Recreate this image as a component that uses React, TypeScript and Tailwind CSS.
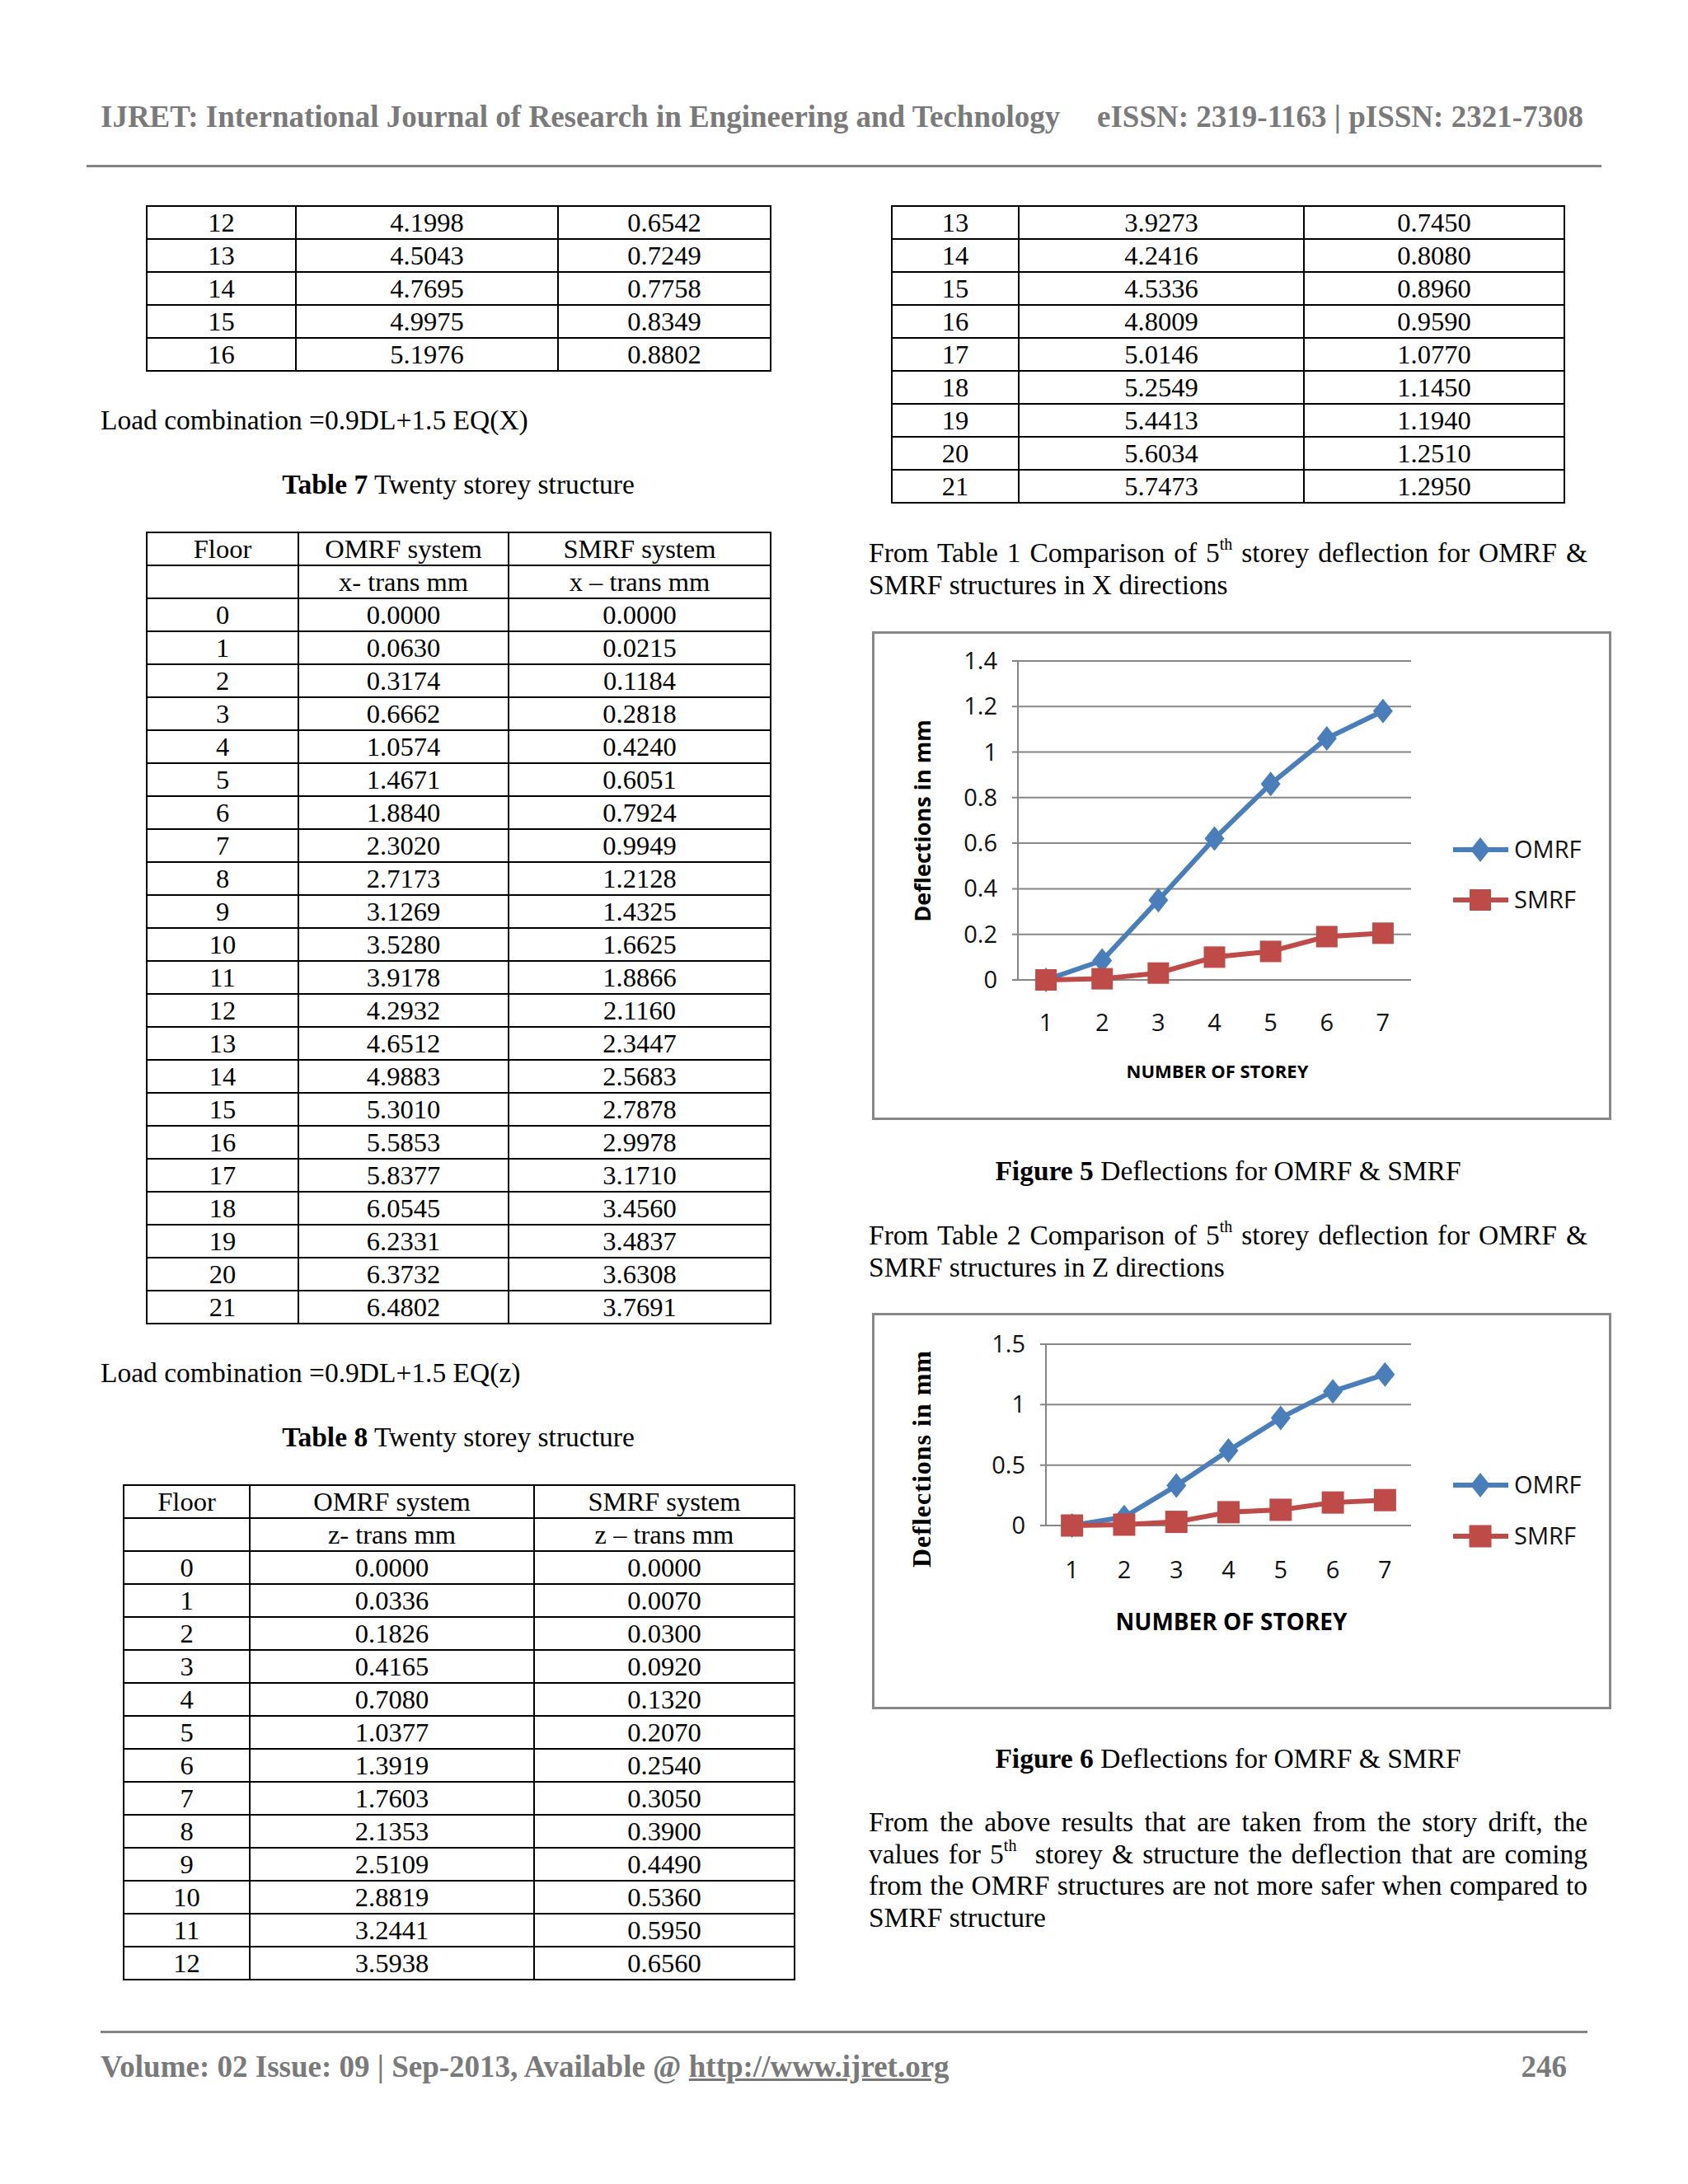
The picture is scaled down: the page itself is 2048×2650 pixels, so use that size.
import React from "react"

type Row = string[]

const tableA: Row[] = [
  ["12", "4.1998", "0.6542"],
  ["13", "4.5043", "0.7249"],
  ["14", "4.7695", "0.7758"],
  ["15", "4.9975", "0.8349"],
  ["16", "5.1976", "0.8802"],
]

const tableB: Row[] = [
  ["13", "3.9273", "0.7450"],
  ["14", "4.2416", "0.8080"],
  ["15", "4.5336", "0.8960"],
  ["16", "4.8009", "0.9590"],
  ["17", "5.0146", "1.0770"],
  ["18", "5.2549", "1.1450"],
  ["19", "5.4413", "1.1940"],
  ["20", "5.6034", "1.2510"],
  ["21", "5.7473", "1.2950"],
]

const table7: Row[] = [
  ["Floor", "OMRF system", "SMRF system"],
  ["", "x- trans mm", "x \u2013 trans mm"],
  ["0", "0.0000", "0.0000"],
  ["1", "0.0630", "0.0215"],
  ["2", "0.3174", "0.1184"],
  ["3", "0.6662", "0.2818"],
  ["4", "1.0574", "0.4240"],
  ["5", "1.4671", "0.6051"],
  ["6", "1.8840", "0.7924"],
  ["7", "2.3020", "0.9949"],
  ["8", "2.7173", "1.2128"],
  ["9", "3.1269", "1.4325"],
  ["10", "3.5280", "1.6625"],
  ["11", "3.9178", "1.8866"],
  ["12", "4.2932", "2.1160"],
  ["13", "4.6512", "2.3447"],
  ["14", "4.9883", "2.5683"],
  ["15", "5.3010", "2.7878"],
  ["16", "5.5853", "2.9978"],
  ["17", "5.8377", "3.1710"],
  ["18", "6.0545", "3.4560"],
  ["19", "6.2331", "3.4837"],
  ["20", "6.3732", "3.6308"],
  ["21", "6.4802", "3.7691"],
]

const table8: Row[] = [
  ["Floor", "OMRF system", "SMRF system"],
  ["", "z- trans mm", "z \u2013 trans mm"],
  ["0", "0.0000", "0.0000"],
  ["1", "0.0336", "0.0070"],
  ["2", "0.1826", "0.0300"],
  ["3", "0.4165", "0.0920"],
  ["4", "0.7080", "0.1320"],
  ["5", "1.0377", "0.2070"],
  ["6", "1.3919", "0.2540"],
  ["7", "1.7603", "0.3050"],
  ["8", "2.1353", "0.3900"],
  ["9", "2.5109", "0.4490"],
  ["10", "2.8819", "0.5360"],
  ["11", "3.2441", "0.5950"],
  ["12", "3.5938", "0.6560"],
]

// widths in px, first column already minus the 2px left border
function DataTable({ rows, widths, className }: { rows: Row[]; widths: number[]; className: string }) {
  return (
    <div className={`border-t-2 border-l-2 border-black w-fit ${className}`}>
      {rows.map((r, i) => (
        <div key={i} className="flex">
          {r.map((c, j) => (
            <div
              key={j}
              style={{ width: widths[j] }}
              className="h-[40px] border-r-2 border-b-2 border-black flex items-center justify-center text-[32.5px] leading-none"
            >
              {c}
            </div>
          ))}
        </div>
      ))}
    </div>
  )
}

function JLine({ children }: { children: React.ReactNode }) {
  return <div className="whitespace-nowrap text-justify [text-align-last:justify]">{children}</div>
}

function Th() {
  return <sup className="text-[20px] -top-[0.75em]">th</sup>
}

type ChartCfg = {
  h: number
  axisX: number
  tickX: number
  y0: number
  pxPerUnit: number
  ticks: [number, string][]
  labelEnd: number
  catW: number
  xLabelY: number
  titleX: number
  titleY: number
  titleSize: number
  yTitleY: number
  yTitleSerif: boolean
  legendY: [number, number]
  omrf: number[]
  smrf: number[]
  marker: number
}

const BLUE = "#4a7ebb"
const RED = "#be4b48"
const GRID = "#868686"
const SANS = "'Open Sans', 'Noto Sans', sans-serif"

function Chart({ c }: { c: ChartCfg }) {
  const top = c.y0 - c.ticks[c.ticks.length - 1][0] * c.pxPerUnit
  const xs = [1, 2, 3, 4, 5, 6, 7].map((i) => c.axisX + c.catW * (i - 0.5))
  const yv = (v: number) => c.y0 - v * c.pxPerUnit
  const diamond = (x: number, y: number, k: string) => (
    <polygon key={k} points={`${x},${y - 15} ${x + 12},${y} ${x},${y + 15} ${x - 12},${y}`} fill={BLUE} />
  )
  const square = (x: number, y: number, k: string) => {
    const s = c.marker
    return <rect key={k} x={x - s / 2} y={y - s / 2} width={s} height={s} fill={RED} />
  }
  return (
    <div className="ml-[4px] w-[897px] border-[3px] border-[#888888]" style={{ height: c.h }}>
      <svg width={891} height={c.h - 6} className="block">
        <g transform="translate(-3,-3)">
          {c.ticks.map(([v, l]) => (
            <g key={l}>
              <line x1={c.tickX} x2={654} y1={yv(v)} y2={yv(v)} stroke={GRID} strokeWidth={2} />
              <text x={c.labelEnd} y={yv(v) + 10} textAnchor="end" fontFamily={SANS} fontSize={29} fill="#111">
                {l}
              </text>
            </g>
          ))}
          <line x1={c.axisX} x2={c.axisX} y1={top} y2={c.y0} stroke={GRID} strokeWidth={2} />
          {xs.map((x, i) => (
            <text key={i} x={x} y={c.xLabelY + 10} textAnchor="middle" fontFamily={SANS} fontSize={29} fill="#111">
              {i + 1}
            </text>
          ))}
          <polyline
            points={c.omrf.map((v, i) => `${xs[i]},${yv(v)}`).join(" ")}
            fill="none"
            stroke={BLUE}
            strokeWidth={6}
            strokeLinejoin="round"
          />
          {c.omrf.map((v, i) => diamond(xs[i], yv(v), "d" + i))}
          <polyline
            points={c.smrf.map((v, i) => `${xs[i]},${yv(v)}`).join(" ")}
            fill="none"
            stroke={RED}
            strokeWidth={6}
            strokeLinejoin="round"
          />
          {c.smrf.map((v, i) => square(xs[i], yv(v), "s" + i))}
          <text
            x={c.titleX}
            y={c.titleY}
            textAnchor="middle"
            dominantBaseline="middle"
            fontFamily={SANS}
            fontWeight={700}
            fontSize={c.titleSize}
            fill="#000"
          >
            NUMBER OF STOREY
          </text>
          <text
            transform={`translate(64,${c.yTitleY}) rotate(-90)`}
            textAnchor="middle"
            dominantBaseline="middle"
            fontFamily={c.yTitleSerif ? "'Liberation Serif', serif" : SANS}
            fontWeight={700}
            fontSize={c.yTitleSerif ? 32 : 27}
            letterSpacing={c.yTitleSerif ? 1 : 0}
            fill="#000"
          >
            Deflections in mm
          </text>
          <line x1={705} x2={772} y1={c.legendY[0]} y2={c.legendY[0]} stroke={BLUE} strokeWidth={6} />
          {diamond(738, c.legendY[0], "ld")}
          <text x={779} y={c.legendY[0] + 10} fontFamily={SANS} fontSize={29} fill="#111">
            OMRF
          </text>
          <line x1={705} x2={772} y1={c.legendY[1]} y2={c.legendY[1]} stroke={RED} strokeWidth={6} />
          {square(738, c.legendY[1], "ls")}
          <text x={779} y={c.legendY[1] + 10} fontFamily={SANS} fontSize={29} fill="#111">
            SMRF
          </text>
        </g>
      </svg>
    </div>
  )
}

const chart1: ChartCfg = {
  h: 593,
  axisX: 177,
  tickX: 170,
  y0: 423,
  pxPerUnit: 276.5,
  ticks: [
    [0, "0"],
    [0.2, "0.2"],
    [0.4, "0.4"],
    [0.6, "0.6"],
    [0.8, "0.8"],
    [1, "1"],
    [1.2, "1.2"],
    [1.4, "1.4"],
  ],
  labelEnd: 152,
  catW: 68.14,
  xLabelY: 475,
  titleX: 419,
  titleY: 536,
  titleSize: 22,
  yTitleY: 230,
  yTitleSerif: false,
  legendY: [265, 326],
  omrf: [0, 0.085, 0.35, 0.62, 0.86, 1.06, 1.18],
  smrf: [0, 0.005, 0.03, 0.1, 0.125, 0.19, 0.205],
  marker: 26,
}

const chart2: ChartCfg = {
  h: 481,
  axisX: 211,
  tickX: 204,
  y0: 258,
  pxPerUnit: 146.7,
  ticks: [
    [0, "0"],
    [0.5, "0.5"],
    [1, "1"],
    [1.5, "1.5"],
  ],
  labelEnd: 186,
  catW: 63.29,
  xLabelY: 312,
  titleX: 436,
  titleY: 378,
  titleSize: 28,
  yTitleY: 177,
  yTitleSerif: true,
  legendY: [209, 271],
  omrf: [0, 0.07, 0.33, 0.62, 0.89, 1.11, 1.25],
  smrf: [0, 0.007, 0.03, 0.11, 0.13, 0.19, 0.21],
  marker: 27,
}

export default function App() {
  return (
    <div className="w-[2048px] h-[2650px] bg-white text-black font-['Liberation_Serif',serif] overflow-hidden">
      {/* running header */}
      <div className="pt-[121px] pl-[122px] pr-[127px] flex justify-between text-[37px] leading-[42px] font-bold text-[#7a7a7a]">
        <span>IJRET: International Journal of Research in Engineering and Technology</span>
        <span>eISSN: 2319-1163 | pISSN: 2321-7308</span>
      </div>
      <div className="mt-[37px] ml-[105px] w-[1838px] h-[3px] bg-[#858585]" />

      <div className="mt-[46px] h-[2215px] flex text-[33.5px] leading-[39px]">
        {/* left column */}
        <div className="ml-[122px] w-[868px]">
          <DataTable rows={tableA} widths={[181, 318, 258]} className="ml-[55px]" />
          <p className="mt-[39px]">Load combination =0.9DL+1.5 EQ(X)</p>
          <p className="mt-[39px] text-center">
            <b>Table 7</b> Twenty storey structure
          </p>
          <DataTable rows={table7} widths={[184, 255, 318]} className="ml-[55px] mt-[38px]" />
          <p className="mt-[39px]">Load combination =0.9DL+1.5 EQ(z)</p>
          <p className="mt-[39px] text-center">
            <b>Table 8</b> Twenty storey structure
          </p>
          <DataTable rows={table8} widths={[153, 345, 316]} className="ml-[27px] mt-[38px]" />
        </div>

        {/* right column */}
        <div className="ml-[64px] w-[872px]">
          <DataTable rows={tableB} widths={[154, 346, 316]} className="ml-[27px]" />
          <div className="mt-[40px]">
            <JLine>
              From Table 1 Comparison of 5<Th /> storey deflection for OMRF &amp;
            </JLine>
            <div>SMRF structures in X directions</div>
          </div>
          <div className="mt-[37px]">
            <Chart c={chart1} />
          </div>
          <p className="mt-[42px] text-center">
            <b>Figure 5</b> Deflections for OMRF &amp; SMRF
          </p>
          <div className="mt-[39px]">
            <JLine>
              From Table 2 Comparison of 5<Th /> storey deflection for OMRF &amp;
            </JLine>
            <div>SMRF structures in Z directions</div>
          </div>
          <div className="mt-[36px]">
            <Chart c={chart2} />
          </div>
          <p className="mt-[40px] text-center">
            <b>Figure 6</b> Deflections for OMRF &amp; SMRF
          </p>
          <div className="mt-[39px] leading-[38.5px]">
            <JLine>From the above results that are taken from the story drift, the</JLine>
            <JLine>
              values for 5<Th />&nbsp; storey &amp; structure the deflection that are coming
            </JLine>
            <JLine>from the OMRF structures are not more safer when compared to</JLine>
            <div>SMRF structure</div>
          </div>
        </div>
      </div>

      {/* running footer */}
      <div className="ml-[122px] w-[1804px] h-[3px] bg-[#858585]" />
      <div className="mt-[20px] pl-[122px] pr-[147px] flex justify-between text-[37px] leading-[42px] font-bold text-[#7a7a7a]">
        <span>
          Volume: 02 Issue: 09 | Sep-2013, Available @ <span className="underline">http://www.ijret.org</span>
        </span>
        <span>246</span>
      </div>
    </div>
  )
}
